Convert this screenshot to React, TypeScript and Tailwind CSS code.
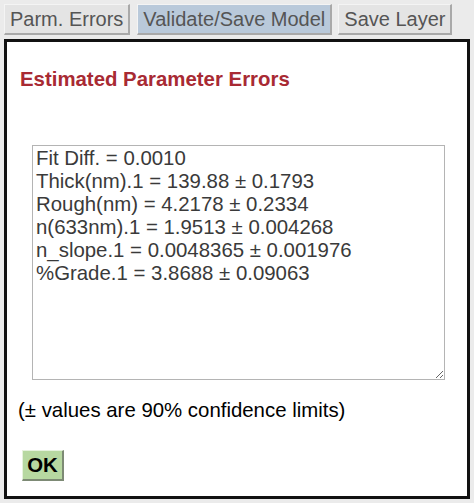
const lines = [
  "Fit Diff. = 0.0010",
  "Thick(nm).1 = 139.88 ± 0.1793",
  "Rough(nm) = 4.2178 ± 0.2334",
  "n(633nm).1 = 1.9513 ± 0.004268",
  "n_slope.1 = 0.0048365 ± 0.001976",
  "%Grade.1 = 3.8688 ± 0.09063",
]

const tabBase =
  "h-[31px] border-t border-l border-t-[#f4f4f4] border-l-[#f4f4f4] border-b-2 border-r-2 border-b-[#a9a9a9] border-r-[#a9a9a9] px-[5px] text-[20px] leading-[23px] text-[#555]"

export default function App() {
  return (
    <div className="h-[503px] w-[474px] overflow-hidden bg-[#ebebeb] font-['Liberation_Sans',Arial,sans-serif]">
      {/* top tab buttons */}
      <div className="flex items-start pl-[4px] pt-[4px]">
        <button type="button" className={`${tabBase} bg-[#e4e4e4]`}>
          Parm. Errors
        </button>
        <button type="button" className={`${tabBase} ml-[7px] bg-[#b9c9da]`}>
          Validate/Save Model
        </button>
        <button type="button" className={`${tabBase} ml-[6px] bg-[#e4e4e4]`}>
          Save Layer
        </button>
      </div>

      {/* dialog */}
      <div className="mx-[4px] mt-[4px] flex h-[460px] flex-col border-[3px] border-[#111] bg-white">
        <h2 className="ml-[13px] mt-[26px] text-[20.4px] font-bold leading-[23px] text-[#a82a33]">
          Estimated Parameter Errors
        </h2>

        <textarea
          readOnly
          defaultValue={lines.join("\n")}
          className="ml-[25px] mt-[54px] h-[235px] w-[413px] border border-[#b4b4b4] px-[3px] py-[1px] text-[20.4px] leading-[23px] text-[#3a3a3a] outline-none"
        />

        <p className="ml-[11px] mt-[19px] text-[20.4px] leading-[23px] text-black">
          (± values are 90% confidence limits)
        </p>

        <div className="ml-[15px] mt-[28px]">
          <button
            type="button"
            className="h-[31px] w-[42px] border-t border-l border-t-[#e6f2de] border-l-[#e6f2de] border-b-2 border-r-2 border-b-[#7d8a75] border-r-[#7d8a75] bg-[#b7d8a1] text-[20.4px] font-bold leading-[23px] text-black"
          >
            OK
          </button>
        </div>
      </div>
    </div>
  )
}
